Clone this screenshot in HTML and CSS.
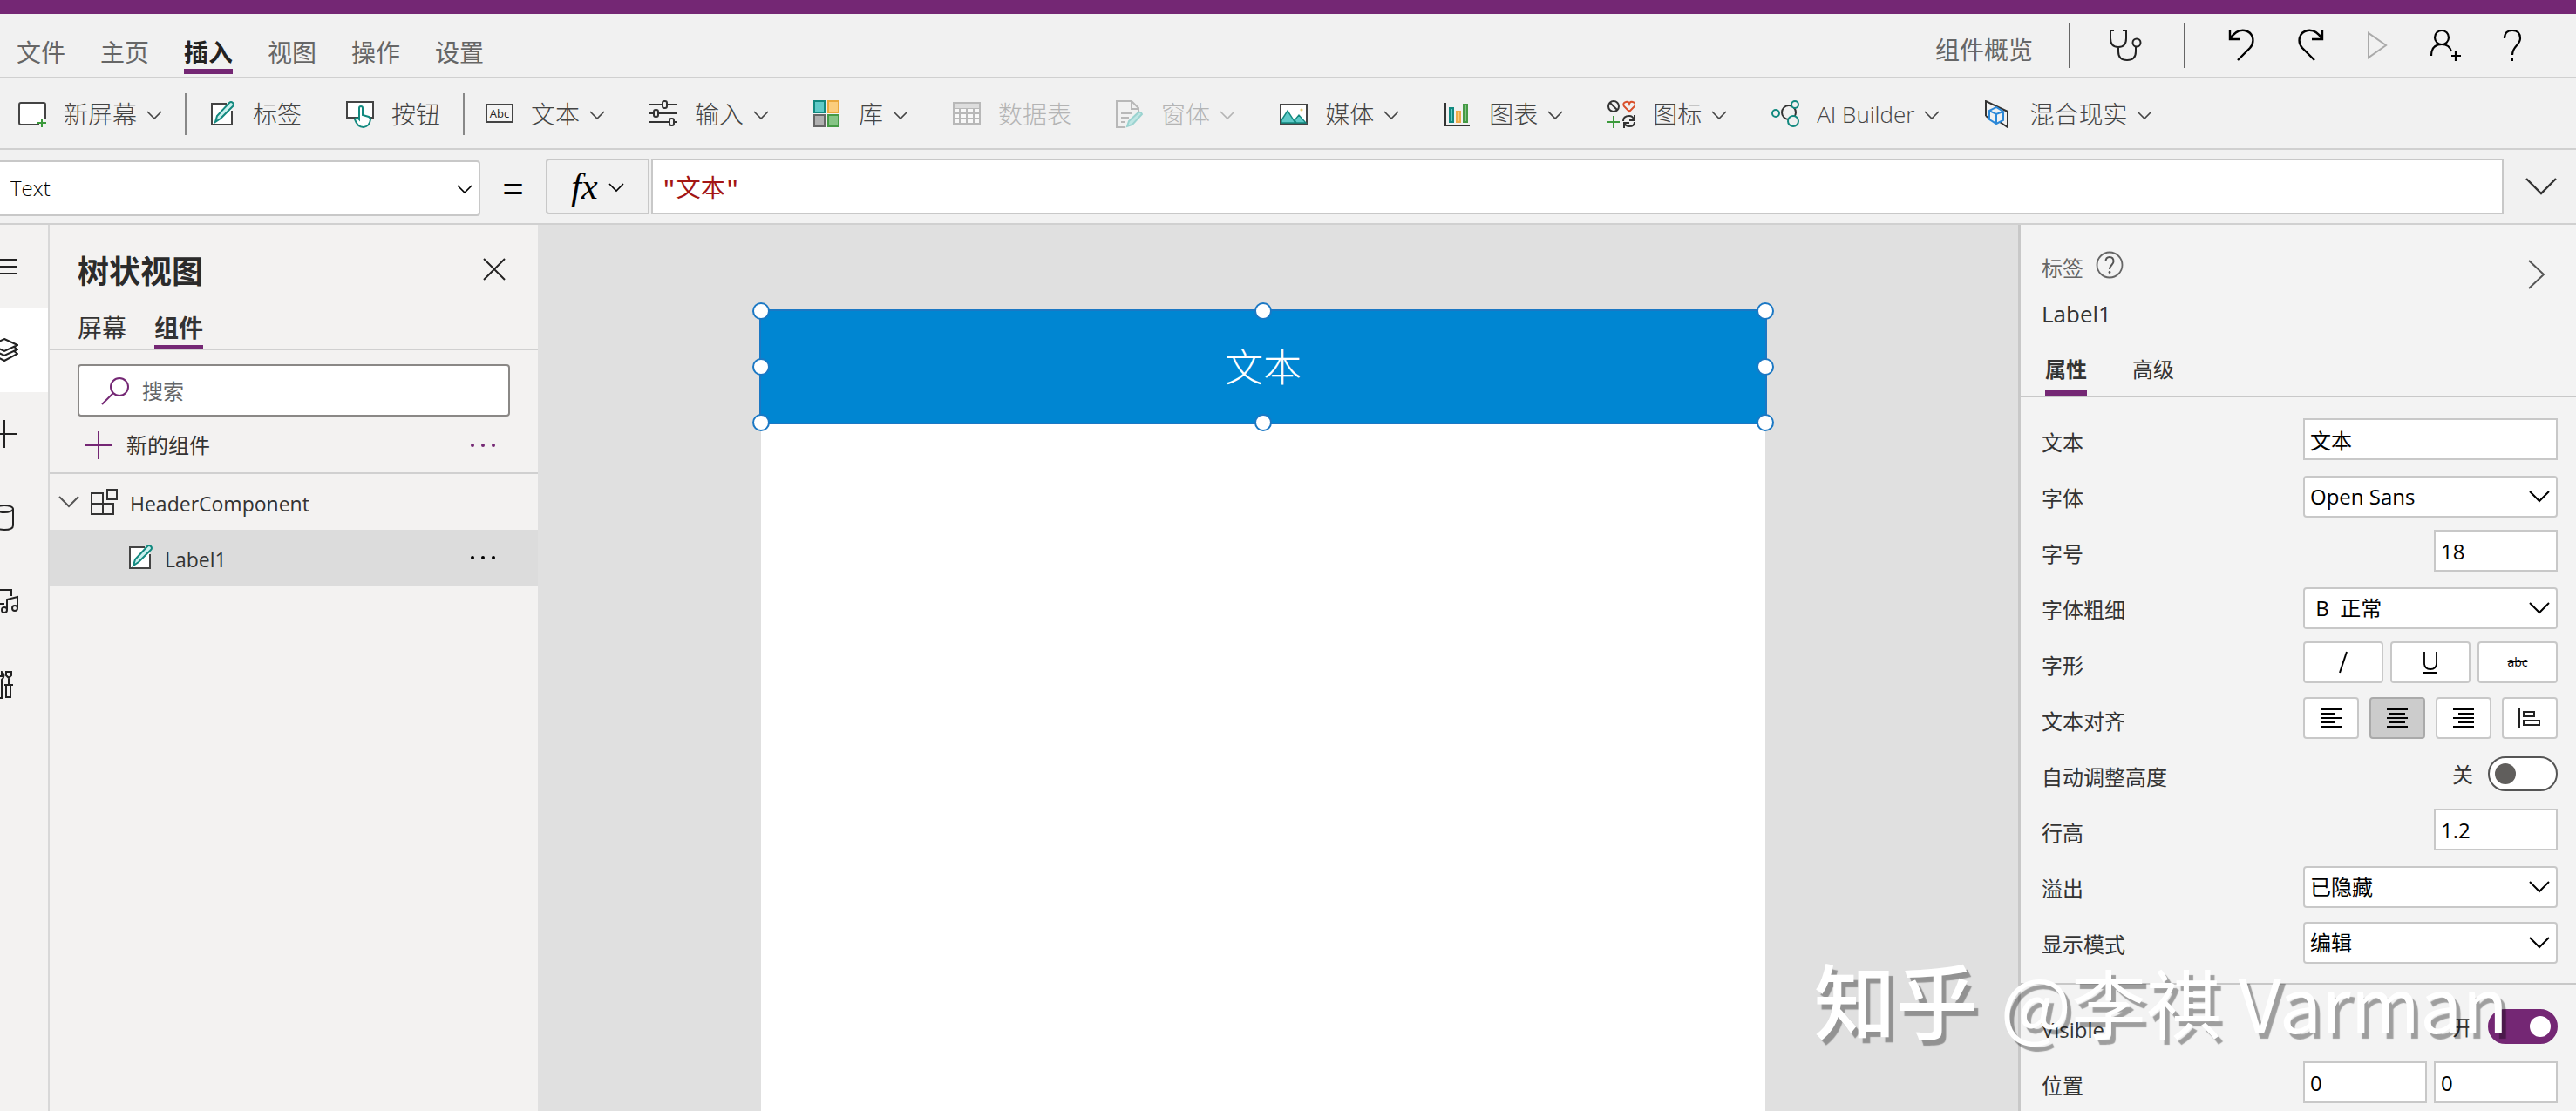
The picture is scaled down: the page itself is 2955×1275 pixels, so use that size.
FILE: index.html
```html
<!DOCTYPE html>
<html lang="zh-CN">
<head>
<meta charset="utf-8">
<meta name="viewport" content="width=device-width, initial-scale=1">
<title>HeaderComponent - Power Apps</title>
<link rel="stylesheet" href="styles.css">
</head>
<body>
<svg class="sprite" aria-hidden="true">
  <symbol id="chev" viewBox="0 0 18 14"><path d="M1 4l8 8 8-8" fill="none" stroke="currentColor" stroke-width="1.6"/></symbol>
  <symbol id="chev-lg" viewBox="0 0 36 20"><path d="M1 1l17 17L35 1" fill="none" stroke="currentColor" stroke-width="2.4"/></symbol>
  <symbol id="chev-md" viewBox="0 0 24 14"><path d="M1 1l11 11L23 1" fill="none" stroke="currentColor" stroke-width="2"/></symbol>
  <symbol id="dots" viewBox="0 0 32 8"><g fill="currentColor"><circle cx="4" cy="4" r="2"/><circle cx="16" cy="4" r="2"/><circle cx="28" cy="4" r="2"/></g></symbol>
  <symbol id="label" viewBox="0 0 32 32"><path d="M22 4H5v24h23V12" fill="#fff" stroke="#444" stroke-width="2"/><path d="M9 25l2-7L25 3q2-2 4 0t0 4L15 21z" fill="#c9f0ee" stroke="#12897f" stroke-width="2"/></symbol>
</svg>

<header class="top">
  <div class="brand"></div>
  <div class="menubar">
    <nav class="menu" aria-label="菜单">
      <button>文件</button><button>主页</button><button class="on">插入</button><button>视图</button><button>操作</button><button>设置</button>
    </nav>
    <div class="tools">
      <span class="overview">组件概览</span>
      <span class="rule"></span>
      <button aria-label="应用检查器"><svg width="38" height="38" viewBox="0 0 38 38"><path d="M6 2H2v9q0 10 9 10t9-10V2h-4M11 21v5q0 10 10 10t10-10v-6" fill="none" stroke="#222" stroke-width="2"/><circle cx="32" cy="16" r="4.5" fill="none" stroke="#222" stroke-width="2"/></svg></button>
      <span class="rule"></span>
      <div class="actions">
        <button aria-label="撤消"><svg width="32" height="38" viewBox="0 0 32 38"><path d="M3 1v11h12M3 12C8 4 14 1 20 2c10 2 12 13 6 20L12 36" fill="none" stroke="#000" stroke-width="2.4"/></svg></button>
        <button aria-label="恢复"><svg width="32" height="38" viewBox="0 0 32 38"><path d="M29 1v11H17M29 12C24 4 18 1 12 2 2 4 0 15 6 22l14 14" fill="none" stroke="#000" stroke-width="2.4"/></svg></button>
        <button aria-label="预览"><svg width="24" height="38" viewBox="0 0 24 38"><path d="M2 5v28l20-14z" fill="none" stroke="#aaa" stroke-width="2"/></svg></button>
        <button aria-label="共享"><svg width="36" height="38" viewBox="0 0 36 38"><circle cx="14" cy="10" r="8" fill="none" stroke="#000" stroke-width="2.2"/><path d="M2 31q0-13 12-13 9 0 11 8M25 31h11M30 25v12" fill="none" stroke="#000" stroke-width="2.2"/></svg></button>
        <button aria-label="帮助"><svg width="22" height="38" viewBox="0 0 22 38"><path d="M2 11q0-9 9-9t9 9c0 8-9 9-9 19" fill="none" stroke="#000" stroke-width="2.2"/><path d="M10 34h2v3h-2z"/></svg></button>
      </div>
    </div>
  </div>

  <div class="ribbon">
    <button><svg class="ico" viewBox="0 0 32 32"><path d="M24 28H3q-2 0-2-2V5q0-2 2-2h26q2 0 2 2v16" fill="#fff" stroke="#444" stroke-width="2"/><path d="M22 26h10M27 21v10" stroke="#3c9a3c" stroke-width="2"/></svg>新屏幕<svg class="chev"><use href="#chev"/></svg></button>
    <span class="sep"></span>
    <button><svg class="ico"><use href="#label"/></svg>标签</button>
    <button><svg class="ico" viewBox="0 0 32 32"><path d="M1 2h30v18H1z" fill="#fff" stroke="#444" stroke-width="2"/><path d="M15 20V9q0-2 2-2t2 2v8l7 2q2 1 2 3-1 8-8 9-7 0-10-9 2-3 5 0z" fill="#fff" stroke="#12897f" stroke-width="2"/></svg>按钮</button>
    <span class="sep"></span>
    <button><svg class="ico" viewBox="0 0 32 32"><path d="M1 5h30v20H1z" fill="#f4f4f4" stroke="#444" stroke-width="2"/><text x="16" y="20" text-anchor="middle" class="abc">Abc</text></svg>文本<svg class="chev"><use href="#chev"/></svg></button>
    <button><svg class="ico" viewBox="0 0 32 32"><g fill="#f1f1f1" stroke="#333" stroke-width="2"><path d="M0 5h32M0 15h32M0 25h32"/><rect x="15" y="1" width="5" height="8" rx="2"/><rect x="5" y="11" width="5" height="8" rx="2"/><rect x="23" y="21" width="5" height="8" rx="2"/></g></svg>输入<svg class="chev"><use href="#chev"/></svg></button>
    <button><svg class="ico" viewBox="0 0 32 32"><g stroke-width="2"><path d="M1 1h12v13H1z" fill="#5fcac8" stroke="#12897f"/><path d="M17 1h12v13H17z" fill="#fbcd7d" stroke="#e9a83e"/><path d="M1 17h12v13H1z" fill="#b0b0b0" stroke="#666"/><path d="M17 17h12v13H17z" fill="#85c485" stroke="#459a45"/></g></svg>库<svg class="chev"><use href="#chev"/></svg></button>
    <button disabled><svg class="ico" viewBox="0 0 32 32"><path d="M1 3h30v24H1zM1 9h30M1 15h30M1 21h30M8 9v18M16 9v18M24 9v18" fill="#f8f8f8" stroke="#b8b8b8" stroke-width="2"/><path d="M2 4h28v5H2z" fill="#ddd"/></svg>数据表</button>
    <button disabled><svg class="ico" viewBox="0 0 32 32"><path d="M11 31H1V1h17l8 8v6M18 1v9h8M6 15h12M6 20h9M6 25h5" fill="none" stroke="#b8b8b8" stroke-width="2"/><path d="M13 30l2-6 11-10q3-1 4 2L19 28z" fill="#bfe6e4" stroke="#9bd3d0" stroke-width="2"/></svg>窗体<svg class="chev"><use href="#chev"/></svg></button>
    <button><svg class="ico" viewBox="0 0 32 32"><path d="M1 5h30v22H1z" fill="#fff" stroke="#444" stroke-width="2"/><path d="M2 23l7-11 9 14H2z M17 23l5-6 8 9H19z" fill="#5fcac8" stroke="#12897f" stroke-width="1.4"/><circle cx="25" cy="11" r="1.6" fill="#e4c96c"/></svg>媒体<svg class="chev"><use href="#chev"/></svg></button>
    <button><svg class="ico" viewBox="0 0 32 32"><path d="M2 3v26h28" fill="none" stroke="#333" stroke-width="2"/><g stroke-width="2"><path d="M7 9h4v16H7z" fill="#5fcac8" stroke="#12897f"/><path d="M15 13h4v12h-4z" fill="#fbcd7d" stroke="#efab4a"/><path d="M23 5h4v20h-4z" fill="#85c485" stroke="#459a45"/></g></svg>图表<svg class="chev"><use href="#chev"/></svg></button>
    <button><svg class="ico" viewBox="0 0 32 32"><g fill="none" stroke="#333" stroke-width="2"><circle cx="7" cy="7" r="6"/><path d="M3 3l8 8"/><path d="M18 24q0-6 7-6 4 0 5 4M31 17v6h-6M31 25q0 5-6 5-4 0-6-4M19 32v-6h6"/></g><path d="M25 13l-6-6q-2-4 2-5 3-1 4 2 1-3 4-2 4 1 2 5z" fill="none" stroke="#d9502c" stroke-width="2"/><path d="M0 25h14M7 18v14" stroke="#3c9a3c" stroke-width="2"/></svg>图标<svg class="chev"><use href="#chev"/></svg></button>
    <button class="latin"><svg class="ico" viewBox="0 0 32 32"><g fill="#f1f1f1" stroke="#12897f" stroke-width="2"><circle cx="20" cy="14" r="8" stroke="#333"/><circle cx="5" cy="15" r="4"/><circle cx="27" cy="5" r="4"/><circle cx="25" cy="24" r="6"/></g></svg>AI Builder<svg class="chev"><use href="#chev"/></svg></button>
    <button><svg class="ico" viewBox="0 0 32 32"><path d="M2 18V1l25 12v18l-9-6M2 18l4 3" fill="none" stroke="#333" stroke-width="2"/><path d="M6 12l8-4 8 5v10l-8 4-8-5zM6 12l8 4 8-3M14 16v11" fill="none" stroke="#2b88d8" stroke-width="2"/></svg>混合现实<svg class="chev"><use href="#chev"/></svg></button>
  </div>

  <div class="formula">
    <div class="select property"><select aria-label="属性"><option>Text</option></select><svg class="chev"><use href="#chev"/></svg></div>
    <span class="equals">=</span>
    <button class="fx"><i>fx</i><svg class="chev"><use href="#chev"/></svg></button>
    <input class="expression" aria-label="公式" value="&quot;文本&quot;">
    <button class="expand" aria-label="展开"><svg width="36" height="20"><use href="#chev-lg"/></svg></button>
  </div>
</header>

<div class="work">
  <nav class="rail" aria-label="导航">
    <button aria-label="展开导航"><svg viewBox="0 0 32 32"><path d="M0 8h31M0 16h31M0 24h31"/></svg></button>
    <button class="on" aria-label="树状视图"><svg viewBox="0 0 32 32"><path d="M16 3l15 7-15 7-15-7zM27 12l4 3-15 7-15-7 4-3M27 17l4 3-15 8-15-8 4-3"/></svg></button>
    <button aria-label="插入"><svg viewBox="0 0 32 32"><path d="M0 16h31M16 0v32"/></svg></button>
    <button aria-label="数据"><svg viewBox="0 0 32 32"><ellipse cx="16" cy="6" rx="10" ry="4"/><path d="M6 6v19q0 5 10 5t10-5V6"/></svg></button>
    <button aria-label="媒体"><svg viewBox="0 0 32 32"><path d="M16 19H1V3h23v7M19 26V14l12-3v13"/><circle cx="16" cy="26" r="3"/><circle cx="28" cy="24" r="3"/></svg></button>
    <button aria-label="高级工具"><svg viewBox="0 0 32 32"><path d="M7 1q-4 4 0 9v21h6V10q5-5 0-9v5H8zM18 1h6v4l-3 3-3-3zM21 7v9M16 16h10M18 17v13h5V17"/></svg></button>
  </nav>

  <aside class="tree">
    <div class="tree-head"><h2>树状视图</h2><button aria-label="关闭"><svg width="26" height="26" viewBox="0 0 26 26"><path d="M1 1l24 24M25 1L1 25" stroke="#222" stroke-width="2"/></svg></button></div>
    <div class="tree-tabs"><button>屏幕</button><button class="on">组件</button></div>
    <label class="search"><svg width="34" height="34" viewBox="0 0 34 34"><circle cx="22" cy="12" r="10" fill="none" stroke="#742774" stroke-width="2"/><path d="M15 19L2 32" stroke="#742774" stroke-width="2"/></svg><input type="text" placeholder="搜索" aria-label="搜索"></label>
    <div class="new"><button><svg width="32" height="32" viewBox="0 0 32 32"><path d="M0 16h32M16 0v32" stroke="#742774" stroke-width="2"/></svg>新的组件</button><button class="more purple" aria-label="更多"><svg width="32" height="8"><use href="#dots"/></svg></button></div>
    <ul>
      <li class="parent"><svg class="fold" width="24" height="14"><use href="#chev-md"/></svg><svg width="32" height="32" viewBox="0 0 32 32"><path d="M1 6h13v12H1zM1 18h25v12H1zM14 18v12M19 2h11v11H19z" fill="none" stroke="#333" stroke-width="2"/></svg><span>HeaderComponent</span></li>
      <li class="child"><svg width="32" height="32"><use href="#label"/></svg><span>Label1</span><button class="more" aria-label="更多"><svg width="32" height="8"><use href="#dots"/></svg></button></li>
    </ul>
  </aside>

  <main class="stage">
    <div class="page">
      <div class="banner">文本<span class="h nw"></span><span class="h n"></span><span class="h ne"></span><span class="h w"></span><span class="h e"></span><span class="h sw"></span><span class="h s"></span><span class="h se"></span></div>
    </div>
  </main>

  <aside class="props">
    <div class="props-head">
      <div>
        <p class="kind">标签<svg width="32" height="32" viewBox="0 0 32 32"><circle cx="16" cy="16" r="14.5" fill="none" stroke="#666" stroke-width="1.8"/><path d="M11.500 12q0-5 4.500-5t4.500 5c0 4-4.500 4-4.500 9" fill="none" stroke="#555" stroke-width="2"/><circle cx="16" cy="24.500" r="1.400" fill="#555"/></svg></p>
        <p class="name">Label1</p>
      </div>
      <button aria-label="折叠"><svg width="20" height="34" viewBox="0 0 20 34"><path d="M1 1l17 16L1 33" fill="none" stroke="#555" stroke-width="2"/></svg></button>
    </div>
    <div class="props-tabs"><button class="on">属性</button><button>高级</button></div>

    <section>
      <div class="row"><label for="text">文本</label><input id="text" class="field" value="文本"></div>
      <div class="row"><label for="font">字体</label><div class="select"><select id="font"><option>Open Sans</option></select><svg width="24" height="14"><use href="#chev-md"/></svg></div></div>
      <div class="row"><label for="size">字号</label><input id="size" class="field half" value="18"></div>
      <div class="row"><label for="weight">字体粗细</label><div class="select"><select id="weight"><option>&nbsp;B&nbsp; 正常</option></select><svg width="24" height="14"><use href="#chev-md"/></svg></div></div>
      <div class="row"><span>字形</span><div class="group three">
        <button aria-label="倾斜"><svg width="32" height="32" viewBox="0 0 32 32"><path d="M20 4l-8 24" stroke="#000" stroke-width="2"/></svg></button>
        <button aria-label="下划线"><svg width="32" height="32" viewBox="0 0 32 32"><path d="M9 4v13q0 7 7 7t7-7V4M8 28h16" fill="none" stroke="#000" stroke-width="1.8"/></svg></button>
        <button aria-label="删除线"><s>abc</s></button>
      </div></div>
      <div class="row"><span>文本对齐</span><div class="group four">
        <button aria-label="左对齐"><svg width="32" height="32" viewBox="0 0 32 32"><path d="M4 6h24M4 11h16M4 16h24M4 21h16M4 26h24" stroke="#000" stroke-width="2"/></svg></button>
        <button class="on" aria-label="居中"><svg width="32" height="32" viewBox="0 0 32 32"><path d="M4 6h24M7 11h18M4 16h24M7 21h18M4 26h24" stroke="#000" stroke-width="2"/></svg></button>
        <button aria-label="右对齐"><svg width="32" height="32" viewBox="0 0 32 32"><path d="M4 6h24M10 11h18M4 16h24M10 21h18M4 26h24" stroke="#000" stroke-width="2"/></svg></button>
        <button aria-label="两端对齐"><svg width="32" height="32" viewBox="0 0 32 32"><path d="M4 4v24M9 9h12v5H9zM9 19h18v5H9z" fill="none" stroke="#222" stroke-width="2"/></svg></button>
      </div></div>
      <div class="row"><label for="auto">自动调整高度</label><div class="toggle"><span>关</span><input id="auto" type="checkbox" role="switch"></div></div>
      <div class="row"><label for="line">行高</label><input id="line" class="field half" value="1.2"></div>
      <div class="row"><label for="overflow">溢出</label><div class="select"><select id="overflow"><option>已隐藏</option></select><svg width="24" height="14"><use href="#chev-md"/></svg></div></div>
      <div class="row"><label for="mode">显示模式</label><div class="select"><select id="mode"><option>编辑</option></select><svg width="24" height="14"><use href="#chev-md"/></svg></div></div>
    </section>
    <section>
      <div class="row"><label for="visible">Visible</label><div class="toggle"><span>开</span><input id="visible" type="checkbox" role="switch" checked></div></div>
      <div class="row"><span>位置</span><div class="group pair"><input class="field half" aria-label="X" value="0"><input class="field half" aria-label="Y" value="0"></div></div>
    </section>
  </aside>
  <div class="watermark"><b>知乎</b>@李祺 Varman</div>
</div>
</body>
</html>
```
FILE: styles.css
```css
* { box-sizing: border-box; }

body {
  margin: 0;
  min-height: 100vh;
  display: flex;
  flex-direction: column;
  overflow-x: hidden;
  background: #f1f1f1;
  color: #333;
  font: 24px/32px "Open Sans", "Noto Sans CJK SC", sans-serif;
}

button, input, select { font: inherit; color: inherit; }
button { padding: 0; border: 0; background: none; cursor: pointer; }
svg { display: block; flex: none; }
p, h2, ul { margin: 0; padding: 0; }
ul { list-style: none; }
.sprite { position: absolute; width: 0; height: 0; }
.chev { width: 18px; height: 14px; }

/* Menu bar */
.brand { height: 16px; background: #742774; }
.menubar {
  display: flex;
  justify-content: space-between;
  height: 74px;
  border-bottom: 2px solid #d0d0d0;
  font-size: 28px;
  color: #666;
}
.menu { display: flex; gap: 40px; align-items: flex-end; padding: 0 19px 3px; }
.menu button { line-height: 38px; border-bottom: 6px solid transparent; }
.menu .on { font-weight: 700; color: #222; border-color: #742774; }
.tools { display: flex; align-items: center; padding-right: 62px; }
.overview { padding-top: 10px; margin-right: 41px; color: #666; }
.rule { width: 2px; height: 52px; background: #666; }
.tools > button { margin: 0 48px 0 44px; }
.actions { display: flex; align-items: center; gap: 48px; margin-left: 48px; }

/* Ribbon */
.ribbon {
  display: flex;
  align-items: center;
  height: 82px;
  padding-top: 2px;
  border-bottom: 2px solid #d0d0d0;
  font-size: 28px;
  font-weight: 300;
  color: #444;
}
.ribbon button {
  display: flex;
  align-items: center;
  margin: 0 26px 0 25px;
  white-space: nowrap;
}
.ribbon button:first-child { margin-left: 21px; }
.ribbon button:disabled { color: #b4b4b4; }
.ribbon .latin { font-size: 26px; }
.ribbon .ico { width: 32px; height: 32px; margin-right: 20px; }
.ribbon .chev { margin-left: 11px; }
.ribbon .sep { width: 2px; height: 48px; margin-right: -1px; background: #888; }
.abc { font: 400 13px "Open Sans", sans-serif; fill: #222; }

/* Formula bar */
.formula {
  display: flex;
  align-items: center;
  height: 86px;
  padding-right: 22px;
  border-bottom: 2px solid #d0d0d0;
}
.select { display: grid; align-items: center; width: 292px; }
.select > * { grid-area: 1 / 1; }
.select > svg { justify-self: end; margin-right: 9px; color: #000; pointer-events: none; }
.select select {
  width: 100%;
  height: 48px;
  padding: 0 36px 0 6px;
  appearance: none;
  border: 2px solid #c8c8c8;
  border-radius: 4px;
  background: #fff;
  color: #000;
}
.property { width: 551px; margin-top: 4px; }
.property select { height: 64px; padding-left: 12px; border-left: 0; border-radius: 0 4px 4px 0; font-weight: 300; }
.equals { width: 75px; padding-top: 4px; text-align: center; font-size: 44px; color: #000; }
.fx {
  display: flex;
  align-items: center;
  justify-content: center;
  gap: 12px;
  width: 119px;
  height: 64px;
  margin-right: 2px;
  border: 2px solid #c8c8c8;
  border-radius: 4px 0 0 4px;
  color: #000;
}
.fx i { font: italic 42px/42px "Liberation Serif", serif; }
.expression {
  flex: 1;
  min-width: 0;
  height: 64px;
  padding: 0 10px;
  border: 2px solid #c8c8c8;
  background: #fff;
  color: #a31515;
  font: 28px "Liberation Mono", "Noto Sans CJK SC", monospace;
}
.expand { margin-left: 25px; }

/* Workspace */
.work { flex: 1; position: relative; display: flex; overflow: hidden; }

.rail { width: 105px; margin-left: -48px; border-right: 2px solid #d8d8d8; background: #f3f2f1; }
.rail button { display: grid; place-items: center; width: 100%; height: 96px; padding-left: 3px; }
.rail .on { background: #fff; }
.rail svg { width: 32px; height: 32px; fill: none; stroke: #222; stroke-width: 2; }

.tree { width: 560px; background: #f3f2f1; }
.tree-head { display: flex; align-items: center; justify-content: space-between; padding: 24px 37px 0 32px; }
.tree-head h2 { padding-top: 6px; font-size: 36px; line-height: 48px; font-weight: 700; color: #2b2b2b; }
.tree-tabs { display: flex; gap: 32px; padding: 20px 32px 0; border-bottom: 2px solid #d0d0d0; font-size: 28px; }
.tree-tabs button { line-height: 40px; border-bottom: 4px solid transparent; }
.tree-tabs .on { font-weight: 700; border-color: #742774; }
.search {
  display: flex;
  align-items: center;
  gap: 14px;
  height: 60px;
  margin: 16px 32px 0;
  padding: 2px 24px 0;
  border: 2px solid #8a8886;
  border-radius: 4px;
  background: #fff;
}
.search input { flex: 1; min-width: 0; padding: 0; border: 0; outline: 0; background: none; }
.search input::placeholder { color: #666; opacity: 1; }
.new { display: flex; align-items: center; justify-content: space-between; height: 66px; padding: 2px 47px 0 40px; border-bottom: 2px solid #d0d0d0; }
.new button:first-child { display: flex; align-items: center; gap: 16px; }
.purple { color: #742774; }
.tree li { display: flex; align-items: center; height: 64px; font-size: 23px; }
.tree li span { padding-top: 4px; }
.parent { padding-left: 10px; gap: 13px; }
.fold { color: #555; }
.child { padding: 0 47px 0 87px; gap: 13px; background: #dcdcdc; }
.child .more { margin-left: auto; color: #000; }

/* Design canvas */
.stage { flex: 1; display: flex; min-width: 0; padding: 99px 290px 0 256px; background: #e0e0e0; }
.page { flex: 1; background: #fff; }
.banner {
  position: relative;
  display: grid;
  place-items: center;
  height: 128px;
  background: #0086d2;
  outline: 2px solid #1b78c4;
  color: #fff;
  font-size: 44px;
  font-weight: 300;
}
.h {
  position: absolute;
  width: 20px;
  height: 20px;
  margin: -10px;
  border: 2px solid #1b78c4;
  border-radius: 50%;
  background: #fff;
}
.nw, .n, .ne { top: 0; }
.w, .e { top: 50%; }
.sw, .s, .se { top: 100%; }
.nw, .w, .sw { left: 0; }
.n, .s { left: 50%; }
.ne, .e, .se { left: 100%; }

/* Properties */
.props { width: 640px; border-left: 3px solid #c8c8c8; background: #f3f3f3; }
.props-head { display: flex; justify-content: space-between; align-items: flex-start; padding: 30px 35px 0 24px; }
.props-head button { margin-top: 10px; }
.kind { display: flex; align-items: center; gap: 14px; height: 40px; color: #666; }
.kind svg { margin-bottom: 8px; }
.name { padding-top: 14px; font-size: 26px; line-height: 36px; }
.props-tabs { display: flex; gap: 52px; padding: 22px 28px 0; border-bottom: 2px solid #c8c8c8; }
.props-tabs button { line-height: 48px; border-bottom: 6px solid transparent; }
.props-tabs .on { font-weight: 700; border-color: #742774; }
.props section { padding: 16px 21px 16px 24px; }
.props section + section { padding-bottom: 0; border-top: 2px solid #c8c8c8; }
.props .select { margin-top: 4px; }
.row { display: flex; align-items: center; justify-content: space-between; height: 64px; }
.row > label, .row > span { padding-top: 8px; }
.field { width: 292px; height: 48px; padding: 0 6px; border: 2px solid #c8c8c8; background: #fff; color: #000; }
.half { width: 142px; }
.group { display: grid; width: 292px; gap: 8px; }
.three { grid-template-columns: repeat(3, 1fr); }
.four { grid-template-columns: repeat(4, 1fr); gap: 12px; }
.pair { grid-template-columns: 1fr 1fr; }
.group button { display: grid; place-items: center; height: 48px; border: 2px solid #c8c8c8; border-radius: 4px; background: #fff; color: #000; }
.group .on { background: #ccc; border-color: #aaa; }
.group s { font-size: 14px; }
.toggle { display: flex; align-items: center; gap: 17px; }
.toggle span { padding-top: 2px; }
.toggle input {
  display: flex;
  align-items: center;
  width: 80px;
  height: 40px;
  margin: 0;
  padding: 0 6px;
  appearance: none;
  border: 2px solid #555;
  border-radius: 20px;
  background: #fff;
}
.toggle input::before { content: ""; width: 24px; height: 24px; border-radius: 50%; background: #605e5c; }
.toggle input:checked { justify-content: flex-end; border-color: #742774; background: #742774; }
.toggle input:checked::before { background: #fff; }

.watermark {
  position: absolute;
  right: 78px;
  bottom: 66px;
  font: 400 86px/120px "Noto Sans CJK SC", sans-serif;
  color: #fff;
  text-shadow: 5px 6px 1px rgba(0, 0, 0, .35);
  pointer-events: none;
  white-space: nowrap;
}
.watermark b { margin-right: 26px; font-size: 94px; font-weight: 500; }
```
